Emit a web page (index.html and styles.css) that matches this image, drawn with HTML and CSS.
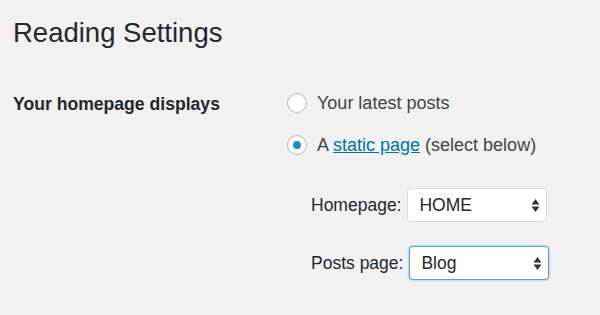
FILE: index.html
```html
<!DOCTYPE html>
<html lang="en">
<head>
    <meta charset="UTF-8">
    <title>Reading Settings</title>
    <link rel="stylesheet" href="styles.css">
</head>
<body>
<div class="wrap">
    <h1 class="title">Reading Settings</h1>
    <div class="form-row">
        <div class="row-label">Your homepage displays</div>
        <div class="row-field">
            <label class="choice">
                <span class="radio"></span>
                <span>Your latest posts</span>
            </label>
            <label class="choice">
                <span class="radio checked"></span>
                <span>A <a href="#" class="link">static page</a> (select below)</span>
            </label>
            <div class="pages">
                <div class="page-row">
                    <span class="page-label">Homepage:</span>
                    <div class="select">
                        <span>HOME</span>
                        <svg class="arrows" width="9" height="15" viewBox="0 0 9 15"><path d="M4.5 1 L8.5 6.5 H0.5 Z M4.5 14 L8.5 8.5 H0.5 Z" fill="#333"/></svg>
                    </div>
                </div>
                <div class="page-row">
                    <span class="page-label">Posts page:</span>
                    <div class="select focus">
                        <span>Blog</span>
                        <svg class="arrows" width="9" height="15" viewBox="0 0 9 15"><path d="M4.5 1 L8.5 6.5 H0.5 Z M4.5 14 L8.5 8.5 H0.5 Z" fill="#333"/></svg>
                    </div>
                </div>
            </div>
        </div>
    </div>
</div>
</body>
</html>
```
FILE: styles.css
```css
html {
    height: 100%;
}
body {
    margin: 0;
    height: 100%;
    background: #F1F1F1;
    color: #23282D;
    font-family: "Liberation Sans", Arial, sans-serif;
    overflow: hidden;
}
.wrap {
    padding: 0 13px;
}
.title {
    margin: 0;
    padding-top: 17px;
    font-size: 27.5px;
    font-weight: 400;
    line-height: 32px;
    color: #23282D;
}
.form-row {
    display: flex;
    margin-top: 44px;
}
.row-label {
    width: 274px;
    flex-shrink: 0;
    font-size: 17.6px;
    font-weight: 700;
    line-height: 20px;
    padding-top: 1px;
}
.row-field {
    display: flex;
    flex-direction: column;
    gap: 22px;
    font-size: 18px;
    color: #444;
}
.choice {
    display: flex;
    align-items: center;
    gap: 10px;
    height: 20px;
}
.radio {
    width: 18px;
    height: 18px;
    border: 1px solid #B4B9BE;
    border-radius: 50%;
    background: #FFF;
    box-shadow: inset 0 1px 2px rgba(0, 0, 0, 0.07);
    display: flex;
    align-items: center;
    justify-content: center;
}
.radio.checked::before {
    content: "";
    width: 8px;
    height: 8px;
    border-radius: 50%;
    background: #1E8CBE;
}
.link {
    color: #0073AA;
}
.pages {
    display: flex;
    flex-direction: column;
    gap: 24px;
    padding-left: 24px;
    margin-top: 11px;
    font-size: 17.5px;
}
.page-row {
    display: flex;
    align-items: center;
    gap: 6px;
}
.page-label {
    color: #23282D;
}
.select {
    box-sizing: border-box;
    width: 140px;
    height: 34px;
    display: flex;
    align-items: center;
    justify-content: space-between;
    padding: 0 6px 0 11px;
    background: #FFF;
    border: 1px solid #DDD;
    border-radius: 4px;
    color: #23282D;
}
.select.focus {
    border-color: #5B9DD9;
    box-shadow: 0 0 2px rgba(30, 140, 190, 0.8);
}
```
